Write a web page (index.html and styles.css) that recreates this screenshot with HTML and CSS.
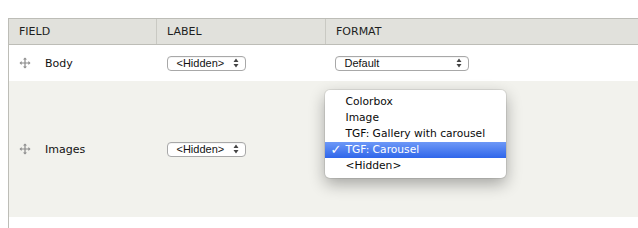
FILE: index.html
```html
<!DOCTYPE html>
<html>
<head>
<meta charset="utf-8">
<link rel="stylesheet" href="styles.css">
</head>
<body>
<div class="wrap">
  <table class="fields">
    <thead>
      <tr>
        <th class="col-field">FIELD</th>
        <th class="col-label">LABEL</th>
        <th class="col-format">FORMAT</th>
      </tr>
    </thead>
    <tbody>
      <tr class="row odd">
        <td>
          <div class="fname">
            <svg class="drag" width="12" height="12" viewBox="0 0 12 12"><path d="M6 0.5 L8 2.6 H6.6 V5.4 H9.4 V4 L11.5 6 L9.4 8 V6.6 H6.6 V9.4 H8 L6 11.5 L4 9.4 H5.4 V6.6 H2.6 V8 L0.5 6 L2.6 4 V5.4 H5.4 V2.6 H4 Z" fill="#8a8a8a"/></svg>
            <span>Body</span>
          </div>
        </td>
        <td>
          <div class="sel sel-label"><span>&lt;Hidden&gt;</span><svg width="6" height="10" viewBox="0 0 6 10"><path d="M3 0.5 L5.5 4 H0.5 Z M3 9.5 L5.5 6 H0.5 Z" fill="#444"/></svg></div>
        </td>
        <td>
          <div class="sel sel-format"><span>Default</span><svg width="6" height="10" viewBox="0 0 6 10"><path d="M3 0.5 L5.5 4 H0.5 Z M3 9.5 L5.5 6 H0.5 Z" fill="#444"/></svg></div>
        </td>
      </tr>
      <tr class="row even">
        <td>
          <div class="fname">
            <svg class="drag" width="12" height="12" viewBox="0 0 12 12"><path d="M6 0.5 L8 2.6 H6.6 V5.4 H9.4 V4 L11.5 6 L9.4 8 V6.6 H6.6 V9.4 H8 L6 11.5 L4 9.4 H5.4 V6.6 H2.6 V8 L0.5 6 L2.6 4 V5.4 H5.4 V2.6 H4 Z" fill="#8a8a8a"/></svg>
            <span>Images</span>
          </div>
        </td>
        <td>
          <div class="sel sel-label"><span>&lt;Hidden&gt;</span><svg width="6" height="10" viewBox="0 0 6 10"><path d="M3 0.5 L5.5 4 H0.5 Z M3 9.5 L5.5 6 H0.5 Z" fill="#444"/></svg></div>
        </td>
        <td class="format-cell">
          <ul class="popup">
            <li>Colorbox</li>
            <li>Image</li>
            <li>TGF: Gallery with carousel</li>
            <li class="active"><span class="check">✓</span>TGF: Carousel</li>
            <li>&lt;Hidden&gt;</li>
          </ul>
        </td>
      </tr>
    </tbody>
  </table>
</div>
</body>
</html>
```

FILE: styles.css
```css
html, body {
  margin: 0;
  padding: 0;
  background: #ffffff;
  overflow: hidden;
}

.wrap {
  margin: 18px 0 0 8px;
  width: 630px;
  height: 210px;
  border-left: 1px solid #bdbdb7;
}

.fields {
  border-collapse: collapse;
  width: 100%;
  font-family: "DejaVu Sans", "Liberation Sans", sans-serif;
  font-size: 11px;
  color: #111;
}

.fields th {
  background: #e1e1dc;
  border-top: 1px solid #bdbdb7;
  border-bottom: 1px solid #bdbdb7;
  height: 25px;
  padding: 0 0 0 10px;
  text-align: left;
  font-weight: normal;
  color: #1e1e1e;
  vertical-align: middle;
}

.fields th + th {
  border-left: 1px solid #c9c9c3;
}

.col-field { width: 137px; }
.col-label { width: 158px; }

.fields td {
  padding: 0 0 0 10px;
  vertical-align: middle;
}

.row.odd td {
  height: 36px;
  background: #ffffff;
}

.row.even td {
  height: 136px;
  background: #f2f2ed;
}

.fname {
  display: flex;
  align-items: center;
  gap: 14px;
}

.drag {
  display: block;
}

.sel {
  display: flex;
  align-items: center;
  justify-content: space-between;
  box-sizing: border-box;
  height: 15px;
  background: #fff;
  border: 1px solid #a8a8a8;
  border-radius: 4px;
  font-family: "Liberation Sans", Arial, sans-serif;
  font-size: 11px;
  color: #111;
  padding: 0 6px 0 9px;
  box-shadow: inset 0 1px 0 #f4f4f4;
}

.sel svg {
  display: block;
}

.sel-label {
  width: 79px;
}

.sel-format {
  width: 134px;
  margin-left: -1px;
}

.format-cell {
  position: relative;
}

.popup {
  position: absolute;
  left: -1px;
  top: 9px;
  width: 181px;
  box-sizing: border-box;
  margin: 0;
  padding: 4px 0 4px 0;
  list-style: none;
  background: #ffffff;
  border-radius: 5px;
  box-shadow: 0 0 0 1px rgba(0,0,0,0.08), 0 6px 16px rgba(0,0,0,0.32);
  font-family: "DejaVu Sans", "Liberation Sans", sans-serif;
  font-size: 10.7px;
  color: #0a0a0a;
}

.popup li {
  position: relative;
  height: 16px;
  line-height: 16px;
  padding-left: 21px;
  white-space: nowrap;
}

.popup li.active {
  background: linear-gradient(#6d98f7, #2f66ea);
  color: #ffffff;
}

.check {
  position: absolute;
  left: 6px;
  top: 0;
  font-size: 13px;
  font-weight: bold;
}
```
